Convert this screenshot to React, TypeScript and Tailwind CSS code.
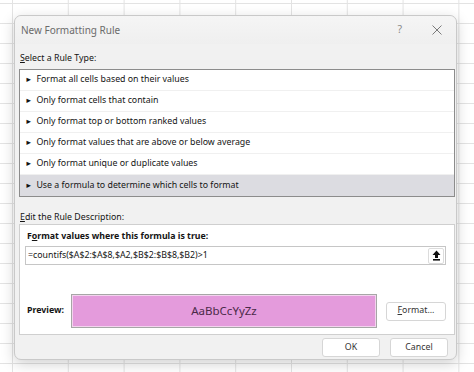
import React from "react";

const rules = [
  "Format all cells based on their values",
  "Only format cells that contain",
  "Only format top or bottom ranked values",
  "Only format values that are above or below average",
  "Only format unique or duplicate values",
  "Use a formula to determine which cells to format",
];

function CollapseIcon() {
  return (
    <svg width="9" height="11" viewBox="0 0 9 11" fill="#111">
      <path d="M4.5 0.5 L8.5 5 H6 V8 H3 V5 H0.5 Z" />
      <rect x="1" y="9" width="7" height="1.6" />
    </svg>
  );
}

export default function App() {
  return (
    <div
      className="relative h-[372px] w-[474px] overflow-hidden bg-white bg-[linear-gradient(to_right,#e3e3e3_1px,transparent_1px),linear-gradient(to_bottom,#e3e3e3_1px,transparent_1px)] bg-[size:55.8px_20px] bg-[position:12px_3px] pl-[14px] pt-[15px]"
      style={{ fontFamily: '"Noto Sans", "Open Sans", Arial, sans-serif' }}
    >
      <div className="flex h-[345px] w-[443px] flex-col rounded-[7px] border border-[#c9c9c9] bg-[#f1f1f1] shadow-[0_4px_14px_rgba(0,0,0,0.18)]">
        {/* title bar */}
        <div className="flex h-[28px] items-center rounded-t-[7px] bg-[linear-gradient(to_bottom,#f5f5f5,#efefef)] pl-[6px] pr-[14px] text-[10px] text-[#6b6b6b]">
          <span className="flex-1 pt-[1px]">New Formatting Rule</span>
          <span className="mr-[30px] text-[10.5px] text-[#8a8a8a]">?</span>
          <svg width="10" height="10" viewBox="0 0 10 10" stroke="#7a7a7a" strokeWidth="1">
            <path d="M0.5 0.5 L9.5 9.5 M9.5 0.5 L0.5 9.5" />
          </svg>
        </div>

        <div className="flex flex-1 flex-col pl-[4px] pr-[2px] text-[8.8px] text-[#141414]">
          <div className="mt-[7px] h-[14px] leading-[14px] pl-[1px]">
            <span className="underline underline-offset-[1px]">S</span>elect a Rule Type:
          </div>

          <div className="mt-[4px] flex h-[128px] w-[436px] flex-col border border-[#8c8c8c] bg-white">
            {rules.map((r, i) => (
              <div
                key={r}
                className={
                  i === rules.length - 1
                    ? "flex h-[21px] flex-1 items-center gap-[4px] bg-[#dcdce1] pl-[5px]"
                    : "flex h-[21px] items-center gap-[4px] border-b border-[#f0f0f0] pl-[5px]"
                }
              >
                <span className="text-[7.5px]">►</span>
                <span>{r}</span>
              </div>
            ))}
          </div>

          <div className="mt-[13px] h-[14px] leading-[14px] pl-[1px]">
            <span className="underline underline-offset-[1px]">E</span>dit the Rule Description:
          </div>

          <div className="flex h-[111px] w-[436px] flex-col border border-[#cfcfcf] bg-white pl-[5px] pr-[8px]">
            <div className="mt-[4px] h-[14px] pl-[2px] font-bold leading-[14px]">
              F<span className="underline underline-offset-[1px]">o</span>rmat values where this formula is true:
            </div>
            <div className="mt-[3px] flex h-[19px] items-center border border-[#c6c6c6] bg-white pl-[2px] pr-[1px]">
              <span className="flex-1">=countifs($A$2:$A$8,$A2,$B$2:$B$8,$B2)&gt;1</span>
              <div className="flex h-[16px] w-[16px] items-center justify-center rounded-[2px] border border-[#dcdcdc] bg-white">
                <CollapseIcon />
              </div>
            </div>

            <div className="mt-[29px] flex items-center">
              <span className="w-[46px] pl-[2px] font-bold">Preview:</span>
              <div className="flex h-[34px] w-[306px] items-center justify-center border border-[#a6a6a6] bg-[#e49bdc] shadow-[inset_0_0_0_1px_#f3d3ee] text-[11.5px] text-[#4a2a48]">
                AaBbCcYyZz
              </div>
              <div className="ml-[9px] flex h-[19px] w-[60px] items-center justify-center rounded-[3px] border border-[#d6d6d6] bg-white text-[#333]">
                <span className="underline underline-offset-[1px]">F</span>ormat...
              </div>
            </div>
          </div>

          <div className="mt-[3px] flex justify-end gap-[10px] pr-[6px]">
            <div className="flex h-[19px] w-[58px] items-center justify-center rounded-[3px] border border-[#d6d6d6] bg-white text-[#333]">
              OK
            </div>
            <div className="flex h-[19px] w-[58px] items-center justify-center rounded-[3px] border border-[#d6d6d6] bg-white text-[#333]">
              Cancel
            </div>
          </div>
        </div>
      </div>
    </div>
  );
}
